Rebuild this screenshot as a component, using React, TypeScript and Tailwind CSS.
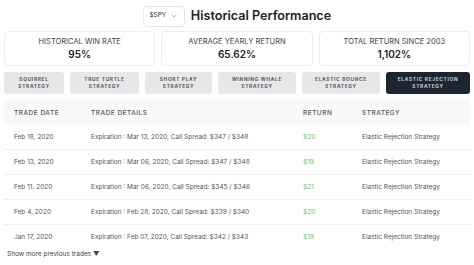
import { ChevronDown } from "lucide-react";

const STATS = [
  { label: "HISTORICAL WIN RATE", value: "95%" },
  { label: "AVERAGE YEARLY RETURN", value: "65.62%" },
  { label: "TOTAL RETURN SINCE 2003", value: "1,102%" },
];

const STRATEGIES = [
  { name: "SQUIRREL", w: "w-[60px]" },
  { name: "TRUE TURTLE", w: "w-[69px]" },
  { name: "SHORT PLAY", w: "w-[67px]" },
  { name: "WINNING WHALE", w: "w-[78px]" },
  { name: "ELASTIC BOUNCE", w: "w-[78px]" },
  { name: "ELASTIC REJECTION", w: "w-[84px]", active: true },
];

const TRADES = [
  { date: "Feb 18, 2020", details: "Expiration : Mar 13, 2020, Call Spread: $347 / $348", ret: "$20" },
  { date: "Feb 13, 2020", details: "Expiration : Mar 06, 2020, Call Spread: $347 / $348", ret: "$19" },
  { date: "Feb 11, 2020", details: "Expiration : Mar 06, 2020, Call Spread: $345 / $346", ret: "$21" },
  { date: "Feb 4, 2020", details: "Expiration : Feb 28, 2020, Call Spread: $339 / $340", ret: "$20" },
  { date: "Jan 17, 2020", details: "Expiration : Feb 07, 2020, Call Spread: $342 / $343", ret: "$19" },
];

export default function App() {
  return (
    <div className="h-[265px] w-[474px] overflow-hidden bg-white px-1 font-['Inter',sans-serif] text-[#333]">
      <div className="flex h-[31px] items-center justify-center gap-1.5 pt-px">
        <div className="flex h-[21px] w-[42px] items-center justify-center gap-1 rounded border border-[#e6e6e6] text-[6.5px] text-[#333]">
          $SPY
          <ChevronDown className="h-2 w-2 text-[#999]" strokeWidth={2} />
        </div>
        <h1 className="text-[12.6px] font-semibold text-[#222]">Historical Performance</h1>
      </div>

      <div className="flex gap-1.5">
        {STATS.map((s) => (
          <div
            key={s.label}
            className="flex h-[35px] flex-1 flex-col items-center justify-center gap-[4px] rounded border border-[#eeeeee]"
          >
            <div className="text-[7.5px] leading-none text-[#444]">{s.label}</div>
            <div className="text-[10px] font-semibold leading-none text-[#222]">{s.value}</div>
          </div>
        ))}
      </div>

      <div className="mt-1.5 flex gap-1.5">
        {STRATEGIES.map((s) => (
          <div
            key={s.name}
            className={`flex h-[22px] ${s.w} flex-col items-center justify-center rounded-[3px] text-[4.8px] font-bold leading-[7px] tracking-[0.7px] ${
              s.active ? "bg-[#1e2532] text-[#c9ccd2]" : "bg-[#e6e7e9] text-[#555a60]"
            }`}
          >
            <span>{s.name}</span>
            <span>STRATEGY</span>
          </div>
        ))}
      </div>

      <table className="mt-[6px] w-full border-collapse text-left text-[6.5px] text-[#555]">
        <thead>
          <tr className="h-[24px] bg-[#f7f8f9] text-[6.5px] tracking-[0.5px] text-[#555]">
            <th className="w-[87px] pl-2.5 pt-[3px] font-medium">TRADE DATE</th>
            <th className="w-[212px] pt-[3px] font-medium">TRADE DETAILS</th>
            <th className="w-[59px] pt-[3px] font-medium">RETURN</th>
            <th className="pt-[3px] font-medium">STRATEGY</th>
          </tr>
        </thead>
        <tbody>
          {TRADES.map((t, i) => (
            <tr key={t.date} className={`h-[25px] ${i < TRADES.length - 1 ? "border-b border-[#efefef]" : ""}`}>
              <td className="pl-2.5 pt-[3px]">{t.date}</td>
              <td className="pt-[3px]">{t.details}</td>
              <td className="pt-[3px] text-[#6cc46c]">{t.ret}</td>
              <td className="pt-[3px]">Elastic Rejection Strategy</td>
            </tr>
          ))}
        </tbody>
      </table>

      <div className="mt-[1px] pl-[3px] text-[6.5px] text-[#444]">Show more previous trades ▼</div>
    </div>
  );
}
